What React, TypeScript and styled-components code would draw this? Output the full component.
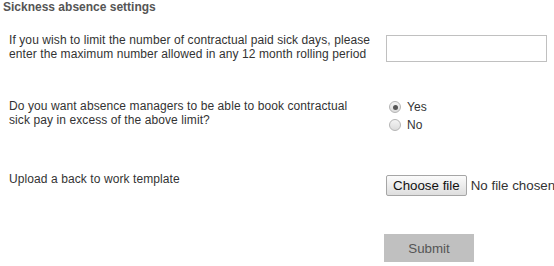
import React from 'react';
import styled, { createGlobalStyle } from 'styled-components';

const GlobalStyle = createGlobalStyle`
  html, body {
    margin: 0;
    padding: 0;
    background: #fff;
  }
  body {
    font-family: 'Liberation Sans', Arial, sans-serif;
    font-size: 12px;
    color: #333;
  }
`;

const Form = styled.form`
  display: flex;
  flex-direction: column;
  width: 554px;
`;

const Heading = styled.h3`
  margin: 0;
  padding: 0 3px;
  height: 15px;
  font-size: 12px;
  line-height: 15px;
  font-weight: bold;
  color: #555;
`;

const Row = styled.div<{ $top: number }>`
  display: flex;
  align-items: flex-start;
  margin-top: ${(p) => p.$top}px;
`;

const Label = styled.label`
  box-sizing: border-box;
  width: 386px;
  flex: none;
  padding-left: 9px;
  line-height: 14px;
  letter-spacing: 0.09px;
  color: #333;
`;

const Control = styled.div<{ $offset?: number }>`
  display: flex;
  flex-direction: column;
  margin-top: ${(p) => p.$offset ?? 0}px;
`;

const TextInput = styled.input`
  box-sizing: border-box;
  width: 161px;
  height: 27px;
  border: 1px solid #c0c0c0;
  padding: 0 4px;
  font: 12px 'Liberation Sans', Arial, sans-serif;
  outline: none;
`;

const Option = styled.label`
  display: flex;
  align-items: center;
  height: 18px;
  gap: 6px;
  padding-left: 3px;
  font-size: 12px;
  line-height: 14px;
  letter-spacing: 0.09px;
  color: #333;
`;

const RadioDot = styled.span<{ $checked?: boolean }>`
  box-sizing: border-box;
  position: relative;
  width: 12px;
  height: 12px;
  border-radius: 50%;
  border: 1px solid #b4b4b4;
  background: linear-gradient(#f4f4f4, #dcdcdc);
  &::after {
    content: '';
    display: ${(p) => (p.$checked ? 'block' : 'none')};
    position: absolute;
    left: 2.5px;
    top: 2.5px;
    width: 5px;
    height: 5px;
    border-radius: 50%;
    background: #555;
  }
`;

const FilePicker = styled.div`
  display: flex;
  align-items: center;
  gap: 4px;
  font-size: 13.33px;
  color: #333;
  white-space: nowrap;
`;

const FileButton = styled.button`
  box-sizing: border-box;
  height: 21px;
  padding: 0 6px;
  border: 1px solid #a6a6a6;
  border-radius: 2px;
  background: linear-gradient(#fbfbfb, #dedede);
  font: 13.33px 'Liberation Sans', Arial, sans-serif;
  color: #111;
`;

const SubmitButton = styled.button`
  width: 90px;
  height: 28px;
  margin-left: -2px;
  border: none;
  background: #c0c0c0;
  font: 13.33px 'Liberation Sans', Arial, sans-serif;
  color: #555;
`;

const Spacer = styled.div`
  width: 386px;
  flex: none;
`;

export default function App() {
  return (
    <>
      <GlobalStyle />
      <Form onSubmit={(e) => e.preventDefault()}>
        <Heading>Sickness absence settings</Heading>
        <Row $top={18}>
          <Label>
            If you wish to limit the number of contractual paid sick days, please
            <br />
            enter the maximum number allowed in any 12 month rolling period
          </Label>
          <Control $offset={2}>
            <TextInput type="text" />
          </Control>
        </Row>
        <Row $top={37}>
          <Label>
            Do you want absence managers to be able to book contractual
            <br />
            sick pay in excess of the above limit?
          </Label>
          <Control $offset={-1}>
            <Option>
              <RadioDot $checked />
              Yes
            </Option>
            <Option>
              <RadioDot />
              No
            </Option>
          </Control>
        </Row>
        <Row $top={38}>
          <Label>Upload a back to work template</Label>
          <Control $offset={3}>
            <FilePicker>
              <FileButton type="button">Choose file</FileButton>
              No file chosen
            </FilePicker>
          </Control>
        </Row>
        <Row $top={38}>
          <Spacer />
          <SubmitButton type="submit">Submit</SubmitButton>
        </Row>
      </Form>
    </>
  );
}
